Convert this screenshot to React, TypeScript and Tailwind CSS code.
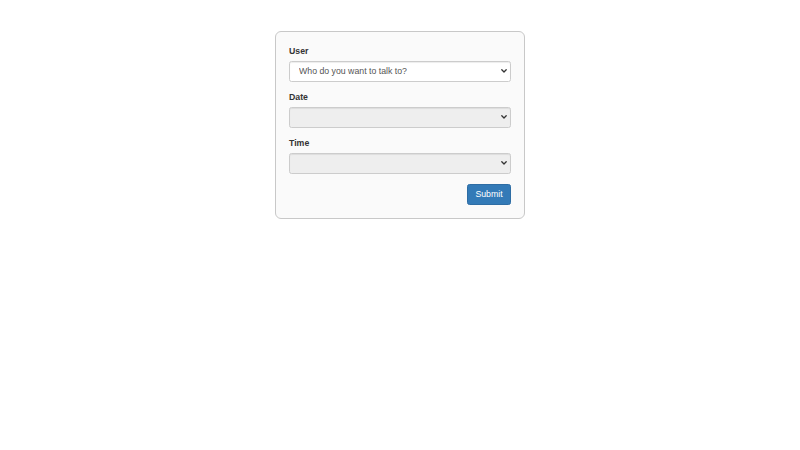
function Chevron() {
  return (
    <svg
      className="pointer-events-none absolute right-[4px] top-1/2 -translate-y-1/2"
      width="6"
      height="4"
      viewBox="0 0 6 4"
      fill="none"
    >
      <path d="M0.8 0.8 L3 3 L5.2 0.8" stroke="#333" strokeWidth="1.3" strokeLinecap="round" strokeLinejoin="round" />
    </svg>
  );
}

function Select({ disabled, children }: { disabled?: boolean; children?: React.ReactNode }) {
  return (
    <div className="relative">
      <select
        disabled={disabled}
        defaultValue=""
        className={
          "block h-[21px] w-full appearance-none rounded-[2.5px] border border-[#ccc] pl-[9px] pr-[12px] text-[8.75px] leading-[12.5px] text-[#555] shadow-[inset_0_1px_1px_rgba(0,0,0,0.075)] " +
          (disabled ? "bg-[#eee]" : "bg-white")
        }
      >
        {children ?? <option value=""></option>}
      </select>
      <Chevron />
    </div>
  );
}

export default function App() {
  return (
    <div className="min-h-[450px] w-full bg-white pt-[31px] font-['Liberation_Sans',Arial,sans-serif] text-[#333]">
      <form
        className="mx-auto flex w-[250px] flex-col rounded-[6px] border border-[#c8c8c8] bg-[#fafafa] px-[13px] pb-[13px] pt-[13px]"
        onSubmit={(e) => e.preventDefault()}
      >
        <label className="mb-[3px] block text-[8.75px] font-bold leading-[12.5px]">User</label>
        <Select>
          <option value="">Who do you want to talk to?</option>
        </Select>

        <label className="mb-[3px] mt-[9.5px] block text-[8.75px] font-bold leading-[12.5px]">Date</label>
        <Select disabled />

        <label className="mb-[3px] mt-[9.5px] block text-[8.75px] font-bold leading-[12.5px]">Time</label>
        <Select disabled />

        <div className="mt-[10px] flex justify-end">
          <button
            type="submit"
            className="h-[21px] w-[44px] rounded-[2.5px] border border-[#2e6da4] bg-[#337ab7] text-[8.75px] leading-none text-white"
          >
            Submit
          </button>
        </div>
      </form>
    </div>
  );
}
